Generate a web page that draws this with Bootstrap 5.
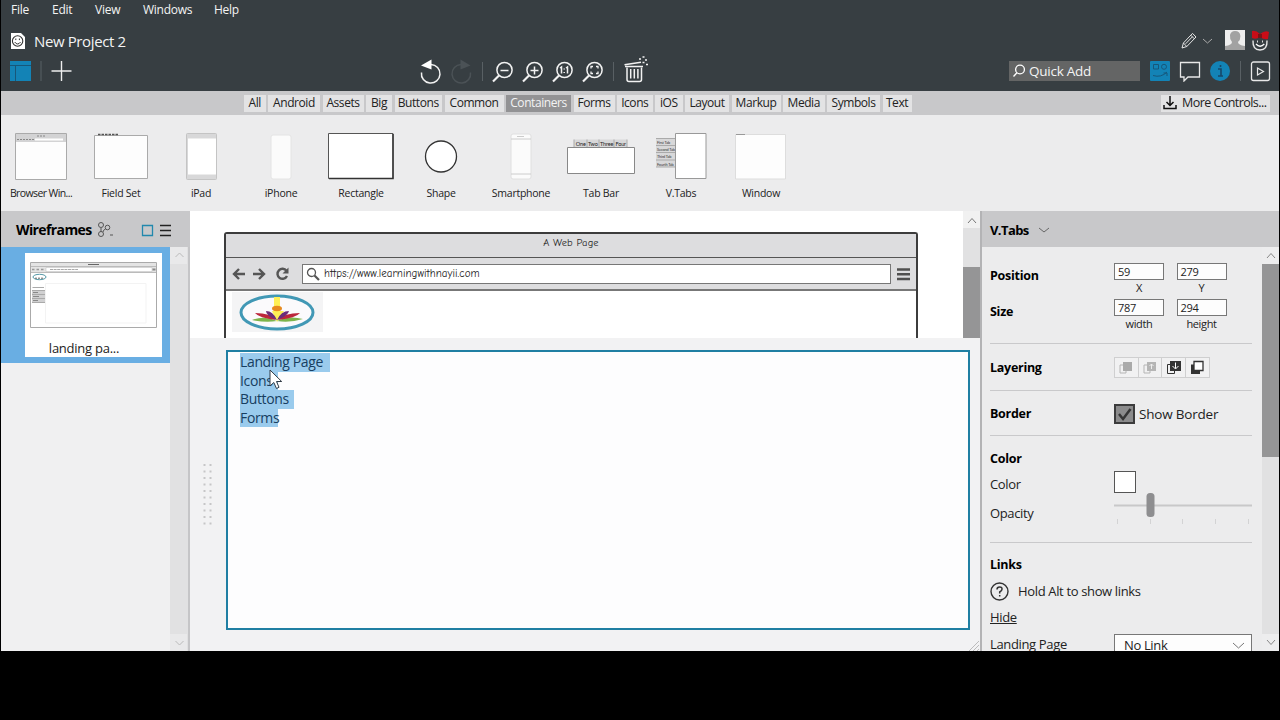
<!DOCTYPE html>
<html lang="en">
<head>
<meta charset="utf-8">
<meta name="viewport" content="width=device-width, initial-scale=1">
<title>New Project 2</title>
<link href="https://cdn.jsdelivr.net/npm/bootstrap@5.3.0/dist/css/bootstrap.min.css" rel="stylesheet">
<style>
body{background:#000;font-family:"Open Sans","Noto Sans",sans-serif;font-size:12px;line-height:16px;color:#222;overflow:hidden;letter-spacing:-.25px}
svg{display:block;flex:none}
.app{width:1280px;height:651px;padding:0 1px;overflow:hidden}
.topbar{height:91px;background:#373e42;color:#f4f4f4}
.menus{height:20px;padding-left:10px}
.menus span:nth-child(1){width:41px}.menus span:nth-child(2){width:43px}.menus span:nth-child(3){width:48px}.menus span:nth-child(4){width:71px}
.titles{height:41px;padding:0 8px 0 9px}
.titles h1{font-size:15px;font-weight:400;margin:0 0 0 9px;line-height:20px;letter-spacing:-.38px}
.pen{margin-right:12px}
.tools{height:20px;padding:0 8px 0 9px}
.acts{margin-left:334px}
.quick{width:131px;height:20px;background:#646565;font-size:13.5px;padding-left:4px;gap:4px;flex:none;margin-left:359px}
.panels{margin-left:10px}
.cats{height:24px;background:#c8c8ca;padding-left:243px}
.tabs2{display:grid;grid-template-columns:21.5px 52px 41px 26px 47.5px 59px 65px 41px 35.5px 27.500px 44px 49px 41.500px 53px 29px;column-gap:2.5px;letter-spacing:-.43px}
.tabs2 span,.more2{height:17px;line-height:16px;background:#e3e3e4;text-align:center;white-space:nowrap}
.tabs2 span.on{background:#929294;color:#f3f3f3}
.more2{width:109px;margin-right:9px;padding-left:2px;gap:5px;font-size:12.5px;letter-spacing:-.55px}
.strip{height:96px;background:#ececed}
.ctl{width:80px;padding-top:16px;font-size:10.5px;letter-spacing:-.25px}
.ctl div{line-height:16px;margin-top:2px}
.ctl .long{letter-spacing:-.6px}
.main2{height:440px}
.side{width:189px;background:#f0f0f1;border-right:2px solid #c5c5c7}
.phead{height:36px;background:#c8c8ca;font-weight:700;color:#000;padding-top:2px}
.side .phead{width:189px;padding-left:15px;font-size:14px;letter-spacing:-.6px;gap:5px}
.sel{width:169px;height:116px;background:#69aee3;padding:6px 8px 0 24px}
.thumb{height:104px;background:#fff;padding-top:9px}
.thumb div{font-size:13px;line-height:18px;text-align:center;margin-top:11px;padding-right:19px}
.sb{width:17px;background:#e1e1e2}
.tall{height:404px}
.mid{width:790px}
.canvas{height:127px;background:#fff}
.page{width:694px;height:106px;margin:21px 0 0 34px;border:2px solid #3c3c3c;border-bottom:0;border-radius:3px 3px 0 0;font-family:"Comic Neue","Lato",sans-serif;color:#222}
.ptitle{height:24px;background:#dddddf;font-size:10.5px;line-height:19px;text-align:center;border-bottom:1px solid #555;letter-spacing:.15px}
.pnav{height:33px;background:#dddddf;border-bottom:2px solid #777}
.url{width:589px;height:20px;background:#fff;border:1px solid #777;font-size:11px;font-weight:500;letter-spacing:.04px;padding:1px 0 0 3px;gap:4px}
.burger{margin-left:6px}
.logo2{width:91px;height:40px;background:#f4f4f5;margin:1px 0 0 6px}
.editor{height:313px;background:#f2f2f3;padding:12px 10px 0 36px}
.dots{position:absolute;left:12px;top:125px}
.area{height:280px;background:#fdfdfe;border:2px solid #207fa3;padding:1px 0 0 12px;font-size:14px;line-height:18.5px;letter-spacing:-.35px;color:#173e61}
.area mark{display:block;background:#9acbed;color:inherit;padding:0;height:18.5px;white-space:nowrap}
.w1{width:90px}.w2{width:38px}.w3{width:54px}.w4{width:38px}
.cursor{position:absolute;left:79px;top:31px}
.grip{position:absolute;right:1px;bottom:0}
.props{width:299px;background:#ececed;border-left:2px solid #b3b3b5}
.props .phead{padding-left:8px;font-size:13px;letter-spacing:-.6px;gap:9px}
.pbody{padding:0 10px 0 8px;width:280px;height:404px;overflow:hidden;font-size:13px;letter-spacing:-.35px}
.pbody b{color:#000;font-size:12.5px;letter-spacing:-.28px}
.sec{border-bottom:1px solid #c9c9cb;width:262px}
.s-pos{height:97px;padding-top:16px}.s-pos b{display:block;padding-top:5px;height:36px}
.s-lay{height:47px}.s-bor{height:45px;padding-top:1px}.s-col{height:107px;padding-top:14px}.s-lnk{padding-top:13px}
.lab{width:124px}
b.lab{padding-top:1px}
.num{width:50px;height:17px;background:#fdfdfd;border:1px solid #777;font-size:11px;line-height:15px;padding-left:3px}
.cap{width:50px;font-size:11px;line-height:16px;height:19px;text-align:center}
.num+.num,.cap+.cap{margin-left:12.5px}
.layers{width:96px;height:21px;border:1px solid #cfcfd0;background:#f1f1f2}
.layers div{width:24px;border-right:1px solid #cfcfd0}
.layers div:last-child{border:0}
.chk{width:21px;height:20px;border:2px solid #3b3b3c;background:#8b8b8c}
.chk+span{margin-left:4px;font-size:13.5px;letter-spacing:-.2px}
.colr{margin-top:4px}.colr .lab{padding-top:5px}
.opac .lab{padding-top:12px}
.hold{height:20px;margin-top:8px;gap:9px}
.hide2{margin-top:8px}
.lp{width:262px;margin-top:9px}.lp .lab{padding-top:2px}
.swatch{width:22px;height:22px;border:1px solid #555;background:#fff}
.drop{width:138px;height:22px;border:1px solid #777;background:#fdfdfd;padding:0 6px 0 9px}
</style>
</head>
<body>
<div class="app">
<header class="topbar">
  <nav class="menus d-flex align-items-center"><span>File</span><span>Edit</span><span>View</span><span>Windows</span><span>Help</span></nav>
  <div class="titles d-flex align-items-center">
    <svg width="15" height="16" viewBox="0 0 15 16"><path d="M1 0H11L15 4V16H1Z" fill="#fff"/><circle cx="7.6" cy="8" r="5.2" fill="none" stroke="#333" stroke-width="1.1"/><path d="M4.700 9Q7.600 13 10.600 9" fill="none" stroke="#333"/><path d="M5.800 5.500v1.600M9.400 5.500v1.600" stroke="#333"/></svg>
    <h1>New Project 2</h1>
    <svg class="pen ms-auto" width="32" height="24" viewBox="0 0 32 24" fill="none" stroke="#e5e5e5"><path d="M1 19L2.400 14L11.500 4.400L15 8L5.800 17.500ZM9.800 6.200L13.300 9.800M2.400 14L5.800 17.500M4.600 14.800L11.600 7.600"/><path d="M22 10l4.500 4 4.500-4" stroke="#aaa"/></svg>
    <svg width="46" height="24" viewBox="0 0 46 24"><rect width="20" height="20" y="1" fill="#eee"/><path d="M5 6Q6 2 10 2Q15 2 15.400 7Q15.500 11 13 13Q13 16 20 17V21H0V17Q7 16 7 13Q4.500 10 5 6Z" fill="#a2a2a2"/><path d="M28 11.500Q27.500 21 35 21Q42.500 21 42 11.500" fill="none" stroke="#e7e7e7" stroke-width="1.400"/><path d="M31 15Q35 19.500 39.300 15" fill="none" stroke="#fff" stroke-width="1.300"/><path d="M32.500 11.500v2M37.500 11.500v2" stroke="#ddd"/><path d="M27 2Q31 1 35 5Q40 1 44 3L43 10Q39 11 35 8Q31 11 27 9Z" fill="#c90d18"/><path d="M33 5h4v4h-4z" fill="#7d1216"/></svg>
  </div>
  <div class="tools d-flex align-items-center">
    <svg width="70" height="22" viewBox="0 0 70 22"><path d="M0 1H21V21H0Z" fill="#1383b6"/><path d="M0 5.500H21M5.500 5.500V21" stroke="#17577a"/><path d="M31 1V21" stroke="#596064"/><path d="M41.500 11H61.500M51.500 1V21" stroke="#eee" stroke-width="1.400"/></svg>
    <svg class="acts" width="236" height="30" viewBox="414 56 236 30" fill="none" stroke="#f2f2f2" stroke-width="1.500">
      <path d="M421.500 72.500A9.300 9.300 0 1 0 431 64.500"/><path d="M421 65.500L431.500 59.500V69.500Z" fill="#fff" stroke="none"/>
      <g stroke="#4b5256"><path d="M470.500 72.500A9.300 9.300 0 1 1 461 64.500"/><path d="M470.500 65.500L460.500 59.500V69.500Z" fill="#4b5256" stroke="none"/><path d="M482.500 62V81M613.500 62V81" stroke="#596064" stroke-width="1"/></g>
      <g id="mag"><circle cx="504.500" cy="70" r="7.600"/><path d="M499 75.500L493 81.500" stroke-width="2.200"/></g>
      <use href="#mag" x="30"/><use href="#mag" x="60"/><use href="#mag" x="90"/>
      <path d="M500.500 70.500H508.500M530.500 70.500H538.500M534.500 66.500V74.500"/>
      <path d="M560 68L561.500 67V73.500M566 68L567.500 67V73.500M564.200 68.500V69.500M564.200 72V73"/>
      <path d="M591 68.500V66.500H593M596 66.500H598V68.500M598 71.500V73.500H596M593 73.500H591V71.500" stroke-width="1.300"/>
      <path d="M627 67.500V79.500Q627 81.500 629 81.500H639.500Q641.500 81.500 641.500 79.500V67.500M630.700 69V78.500M634.300 69V78.500M637.900 69V78.500"/><path d="M624.500 64.800L641 62.200M625 66.500H643"/>
      <path d="M639 59h2M642.500 57h2M645 60h2M646 64.500h2M642.500 62.500h2"/>
    </svg>
    <div class="quick d-flex align-items-center"><svg width="12" height="14" viewBox="0 0 12 14" fill="none" stroke="#fff" stroke-width="1.300"><circle cx="7" cy="5.500" r="4.400"/><path d="M3.900 8.800L.5 12.500"/></svg>Quick Add</div>
    <svg class="panels" width="122" height="22" viewBox="0 0 122 22" fill="none" stroke="#e8e8e8"><rect y="1" width="20" height="20" rx="1" fill="#1383b6" stroke="none"/><g stroke="#17577a"><path d="M3.500 4.500H8.500V9H3.500ZM3 15.500Q11 18 17 12M13.500 13H17V16"/><circle cx="14" cy="6.800" r="2.500"/></g><path d="M30.500 2.500H49.500V17H38L34 21V17H30.500Z" stroke-width="1.300"/><circle cx="70" cy="11" r="10" fill="#1383b6" stroke="none"/><path d="M68 9H71V15.500M68 16H73M70.500 5V7" stroke="#17486a" stroke-width="1.600"/><path d="M90.500 1V21" stroke="#596064"/><rect x="101.500" y="2" width="18" height="18.500" rx="2" stroke-width="1.300"/><path d="M107.500 8V15L113.500 11.500Z" stroke-width="1.200"/></svg>
  </div>
</header>
<div class="cats d-flex align-items-center">
  <div class="tabs2"><span>All</span><span>Android</span><span>Assets</span><span>Big</span><span>Buttons</span><span>Common</span><span class="on">Containers</span><span>Forms</span><span>Icons</span><span>iOS</span><span>Layout</span><span>Markup</span><span>Media</span><span>Symbols</span><span>Text</span></div>
  <div class="more2 d-flex align-items-center ms-auto"><svg width="14" height="14" viewBox="0 0 14 14" fill="none" stroke="#111" stroke-width="1.500"><path d="M7 0V9.500M3.500 6L7 9.500L10.500 6M1 9V12.500H13V9"/></svg><span>More Controls...</span></div>
</div>
<div class="strip d-flex">
  <div class="ctl"><svg class="mx-auto" width="76" height="52" fill="none"><path d="M12.500 2.500H63.500V48.500H12.500Z" fill="#fdfdfd" stroke="#aaa"/><path d="M13 3H63V11H13Z" fill="#d3d3d4"/><path d="M34 5h8M14 8.500h17" stroke="#888" stroke-dasharray="2 1"/><path d="M32 7.500h28v2h-28z" fill="#fff"/></svg><div class="long text-center">Browser Win...</div></div>
  <div class="ctl"><svg class="mx-auto" width="76" height="52"><path d="M11.500 4.500H64.500V47.500H11.500Z" fill="#fdfdfd" stroke="#aaa"/><path d="M15 3.500h20" stroke="#555" stroke-width="1.600" stroke-dasharray="2.500 1"/></svg><div class="text-center">Field Set</div></div>
  <div class="ctl"><svg class="mx-auto" width="76" height="52"><rect x="23.500" y="2.500" width="30" height="46" rx="1" fill="#d8d8d9" stroke="#c4c4c4"/><path d="M25 7.500H53V43.500H25Z" fill="#fff"/></svg><div class="text-center">iPad</div></div>
  <div class="ctl"><svg class="mx-auto" width="76" height="52"><rect x="28" y="4" width="20" height="44" rx="2" fill="#fbfbfb" stroke="#e4e4e4"/></svg><div class="text-center">iPhone</div></div>
  <div class="ctl"><svg class="mx-auto" width="76" height="52"><path d="M5.500 2.500H70V47.500H5.500Z" fill="#fff" stroke="#555"/><path d="M70 3V47.500H6" fill="none" stroke="#333" stroke-width="1.500"/></svg><div class="text-center">Rectangle</div></div>
  <div class="ctl"><svg class="mx-auto" width="76" height="52"><circle cx="38" cy="25.500" r="15.500" fill="#fff" stroke="#333" stroke-width="1.300"/></svg><div class="text-center">Shape</div></div>
  <div class="ctl"><svg class="mx-auto" width="76" height="52"><rect x="28" y="3" width="20" height="45" rx="2" fill="#fbfbfb" stroke="#e0e0e0"/><path d="M28 8H48M28 43H48M34 5.500h7" stroke="#ccc"/></svg><div class="text-center">Smartphone</div></div>
  <div class="ctl"><svg class="mx-auto" width="76" height="52"><path d="M11 8.500H64V17H11Z" fill="#d8d8d9"/><path d="M11 8.500V16M24 8.500V16M36 8.500V16M51 8.500V16M64 8.500V16" stroke="#aaa"/><path d="M4.500 16.500H71.500V42.500H4.500Z" fill="#fff" stroke="#888"/><g font-size="5.500" fill="#222" letter-spacing="-.15" font-family="Lato"><text x="12.800" y="14.500">One</text><text x="25" y="14.500">Two</text><text x="37" y="14.500">Three</text><text x="52.500" y="14.500">Four</text></g></svg><div class="text-center">Tab Bar</div></div>
  <div class="ctl"><svg class="mx-auto" width="76" height="52"><path d="M13 7H32V36H13Z" fill="#d8d8d9"/><path d="M13 7.500H32M13 14.500H32M13 21.500H32M13 29H32M13 36H32" stroke="#aaa"/><path d="M32.500 2.500H63V47.500H32.500Z" fill="#fff" stroke="#999"/><g font-size="3.800" fill="#333" letter-spacing="-.12" font-family="Lato"><text x="14" y="12.500">First Tab</text><text x="14" y="20">Second Tab</text><text x="14" y="27">Third Tab</text><text x="14" y="34.500">Fourth Tab</text></g></svg><div class="text-center">V.Tabs</div></div>
  <div class="ctl"><svg class="mx-auto" width="76" height="52"><path d="M12.500 3.500H62.500V48H12.500Z" fill="#fdfdfd" stroke="#ddd"/><path d="M13 3.500h9" stroke="#999"/></svg><div class="text-center">Window</div></div>
</div>
<div class="main2 d-flex">
  <aside class="side">
    <div class="phead d-flex align-items-center">Wireframes
      <svg width="80" height="20" viewBox="0 0 80 20" fill="none" stroke="#555"><circle cx="4" cy="5" r="2.500"/><circle cx="4" cy="14" r="2.500"/><circle cx="10.500" cy="7.500" r="2.300"/><path d="M4 8V12M6 12Q6 10 8.500 9M13 15h3"/><path d="M45.500 5.500H55.500V15.500H45.500Z" stroke="#2288ad" stroke-width="1.300"/><path d="M63 5.500H74M63 10.500H74M63 15.500H74" stroke="#222" stroke-width="1.300"/></svg></div>
    <div class="d-flex">
      <div class="sel"><div class="thumb"><svg class="mx-auto" width="127" height="66"><path d="M.5 .5H126.500V65.500H.5Z" fill="#fff" stroke="#aaa"/><path d="M1 1H126V10H1Z" fill="#e4e4e4"/><path d="M1 4.500H126M1 10.500H126" stroke="#bbb"/><path d="M58 2.500h11" stroke="#666"/><path d="M2 7.500H14" stroke="#999" stroke-width="1.600" stroke-dasharray="2.500 2"/><path d="M16 5.500H122V9.500H16Z" fill="#fff" stroke="#bbb" stroke-width=".5"/><path d="M20 7.500h28" stroke="#aaa" stroke-dasharray="3 .6"/><path d="M122.500 7.500h3" stroke="#888" stroke-width="2"/><ellipse cx="9.500" cy="15" rx="6.500" ry="2.700" fill="#fff" stroke="#5599a8"/><path d="M5 16.200h9" stroke="#666" stroke-dasharray="2 1"/><path d="M15.500 21.500H116V61H15.500Z" fill="none" stroke="#f3f3f3"/><path d="M2 28H15V41H2Z" fill="#d0d0d1"/><path d="M2.500 25.500H14M2 28.500H15M2 32.500H15M2 36.500H15M2 40.500H15" stroke="#aaa"/><path d="M3 30.500h5M3 34.500h6M3 38.500h5" stroke="#888"/></svg><div>landing pa...</div></div></div>
      <div class="sb tall d-flex flex-column justify-content-between flex-fill"><svg width="17" height="17"><path d="M0 0H17V17H0Z" fill="#e9e9ea"/><path d="M5.500 10l4-4 4 4" fill="none" stroke="#bbb"/></svg><svg width="17" height="17"><path d="M0 0H17V17H0Z" fill="#e9e9ea"/><path d="M5.500 7l4 4 4-4" fill="none" stroke="#bbb"/></svg></div>
    </div>
  </aside>
  <main class="mid">
    <div class="canvas d-flex">
      <div class="page"><div class="ptitle">A Web Page</div>
        <div class="pnav d-flex align-items-center">
          <svg width="76" height="16" viewBox="226 266 76 16" fill="none" stroke="#565656" stroke-width="2.400"><path d="M245 274H234M239 269L234 274L239 279M253 274H264M259 269L264 274L259 279"/><path d="M286.500 270.800A5 5 0 1 0 287 276"/><path d="M288.500 267.500V273.500H282.500Z" fill="#565656" stroke="none"/></svg>
          <div class="url d-flex align-items-center"><svg width="14" height="14" fill="none" stroke="#555"><circle cx="5.500" cy="5.500" r="4" stroke-width="1.300"/><path d="M8.500 8.500L13 13" stroke-width="2.200"/></svg>https://www.learningwithnayii.com</div>
          <svg class="burger" width="13" height="14"><path d="M0 2.500H13M0 7.200H13M0 12H13" stroke="#505050" stroke-width="2.600"/></svg>
        </div>
        <div class="logo2"><svg width="91" height="40" viewBox="232 292 91 40"><ellipse cx="277" cy="312.500" rx="36" ry="16.500" fill="#fbfafc" stroke="#4198b5" stroke-width="3"/><path d="M274 297H280V311H284L277 322L272 311H274Z" fill="#fff055"/><ellipse cx="277" cy="308.500" rx="5" ry="2.700" fill="#e78b20"/><path d="M277 321Q264 315 252 320Q266 323 277 321Q290 323 303 319Q289 315 277 321Z" fill="#7db44b"/><path d="M276 320Q271 313 255 313Q259 318 276 320ZM278 320Q284 313 300 313Q296 318 278 320Z" fill="#bc263b"/><path d="M277 320Q273 311 266 311Q266 316 277 320ZM277 320Q281 311 289 311Q288 316 277 320Z" fill="#6b2d79"/></svg></div>
      </div>
      <div class="sb ms-auto"><svg width="17" height="127"><path d="M0 0H17V17H0Z" fill="#f1f1f1"/><path d="M5 12l4-4.500 4 4.500" fill="none" stroke="#777"/><path d="M0 56H17V127H0Z" fill="#959596"/></svg></div>
    </div>
    <div class="editor position-relative">
      <svg class="dots" width="12" height="64"><path d="M2.500 1V63M8.500 1V63" stroke="#c6c6c7" stroke-width="2" stroke-dasharray="2 4.500"/></svg>
      <div class="area"><mark class="w1">Landing Page</mark><mark class="w2">Icons</mark><mark class="w3">Buttons</mark><mark class="w4">Forms</mark></div>
      <svg class="cursor" width="16" height="21"><path d="M1 1V17L4.800 13.500L7.500 19.500L10 18.300L7.500 12.500H12.700Z" fill="#fff" stroke="#303b45"/></svg>
      <svg class="grip" width="10" height="10"><path d="M0 10L10 0M4 10L10 4M8 10L10 8" stroke="#bbb"/></svg>
    </div>
  </main>
  <aside class="props">
    <div class="phead d-flex align-items-center">V.Tabs<svg width="12" height="8"><path d="M1 2l5 4 5-4" fill="none" stroke="#666"/></svg></div>
    <div class="d-flex">
    <div class="pbody">
      <div class="sec s-pos d-flex"><div class="lab"><b>Position</b><b>Size</b></div>
        <div><div class="d-flex"><div class="num">59</div><div class="num">279</div></div><div class="d-flex"><div class="cap">X</div><div class="cap">Y</div></div><div class="d-flex"><div class="num">787</div><div class="num">294</div></div><div class="d-flex"><div class="cap">width</div><div class="cap">height</div></div></div></div>
      <div class="sec s-lay d-flex align-items-center"><b class="lab">Layering</b><div class="layers d-flex"><div><svg width="22" height="19"><path d="M5 7h6v8H5z" fill="none" stroke="#b5b5b5"/><path d="M8 4h9v9H8z" fill="#aaa"/></svg></div><div><svg width="22" height="19"><path d="M5 7h6v8H5z" fill="none" stroke="#b5b5b5"/><path d="M8 4h9v9H8z" fill="#b5b5b5"/><path d="M12.500 11V6M10.500 8l2-2 2 2" stroke="#eee" fill="none"/></svg></div><div><svg width="22" height="19"><path d="M5.500 6.500h7v9h-7z" fill="none" stroke="#333"/><path d="M8 3h11v10H8z" fill="#333"/><path d="M13.500 4.500v6M10.500 8l3 3L16.500 8" stroke="#fff" fill="none"/></svg></div><div><svg width="22" height="19"><path d="M5 6.500h9v9.500H5z" fill="#333"/><path d="M8 3.500h9v9H8z" fill="#fff" stroke="#333" stroke-width="1.300"/></svg></div></div></div>
      <div class="sec s-bor d-flex align-items-center"><b class="lab">Border</b><div class="chk"><svg width="17" height="16"><path d="M3 8l4 5 7.500-10" fill="none" stroke="#353535" stroke-width="2.500"/></svg></div><span>Show Border</span></div>
      <div class="sec s-col"><b>Color</b>
        <div class="colr d-flex"><span class="lab">Color</span><div class="swatch"></div></div>
        <div class="opac d-flex"><span class="lab">Opacity</span><svg width="138" height="34"><path d="M0 12.500H138" stroke="#c8c8c9" stroke-width="2"/><rect x="32.500" y="0" width="8" height="24" rx="3.500" fill="#8e8e90"/><path d="M3.500 26v5M36.500 26v5M68.500 26v5M101.500 26v5M134.500 26v5" stroke="#d3d3d4"/></svg></div></div>
      <div class="s-lnk"><b>Links</b>
        <div class="hold d-flex align-items-center"><svg width="19" height="19" fill="none" stroke="#333"><circle cx="9.500" cy="9.500" r="8.500" stroke-width="1.400"/><path d="M7 7.500Q7 5 9.700 5Q12.200 5 12 7.300Q12 8.500 9.700 10V11.500M9.700 13v1.500" stroke-width="1.500"/></svg><span>Hold Alt to show links</span></div>
        <div class="hide2"><u>Hide</u></div>
        <div class="lp d-flex"><span class="lab">Landing Page</span><div class="drop d-flex align-items-center justify-content-between">No Link<svg width="13" height="9"><path d="M1 2l5.500 5 5.500-5" fill="none" stroke="#777"/></svg></div></div>
      </div>
    </div>
    <div class="sb tall"><svg width="17" height="404"><path d="M0 0H17V17H0ZM0 387H17V404H0Z" fill="#ededee"/><path d="M5 11l4-4.500 4 4.500M5 393l4 4.500 4-4.500" fill="none" stroke="#888"/><path d="M0 17H17V210H0Z" fill="#959596"/></svg></div>
    </div>
  </aside>
</div>
</div>
<script src="https://cdn.jsdelivr.net/npm/bootstrap@5.3.0/dist/js/bootstrap.bundle.min.js"></script>
</body>
</html>
